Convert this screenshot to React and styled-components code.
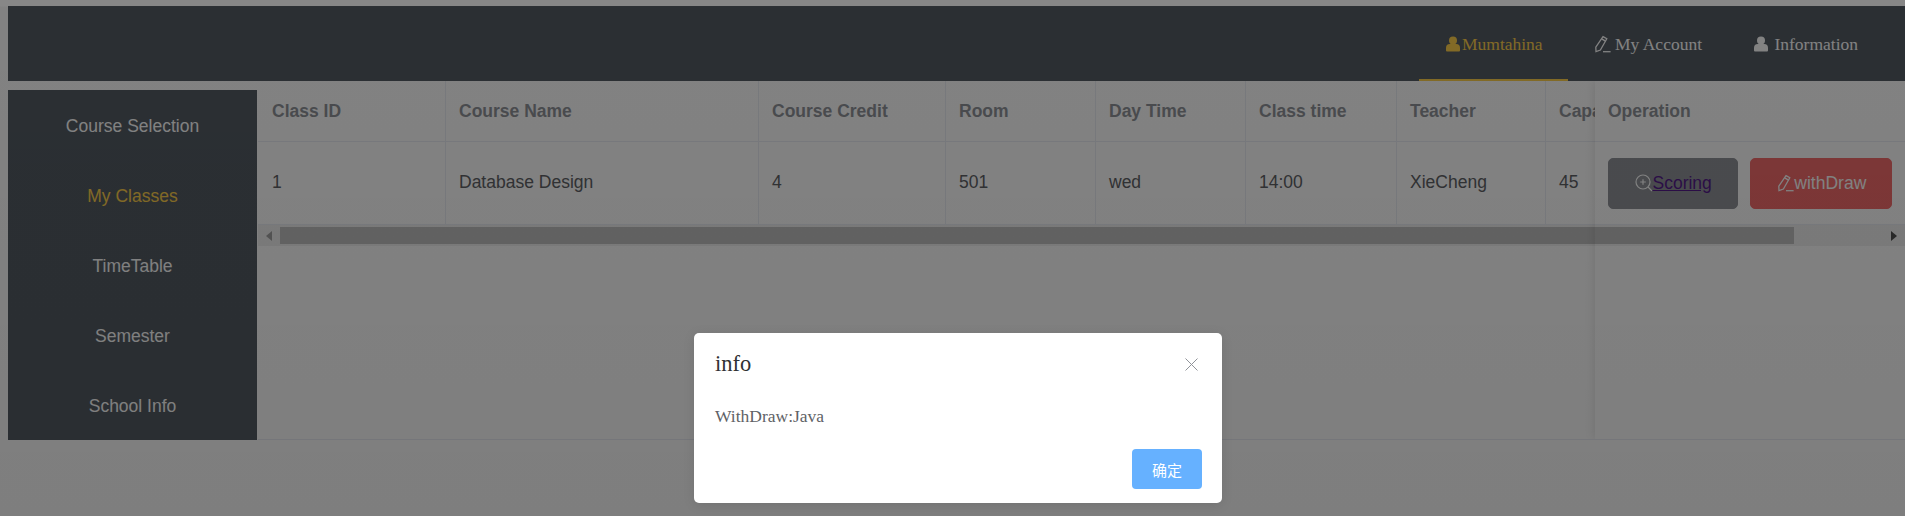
import React from 'react';
import styled, { createGlobalStyle } from 'styled-components';

const GlobalStyle = createGlobalStyle`
  html, body {
    margin: 0;
    padding: 0;
    background: #fff;
    font-family: "Liberation Serif", serif;
  }
`;

const Page = styled.div`
  position: relative;
  width: 1905px;
  height: 516px;
  padding: 6px 0 0 8px;
  box-sizing: border-box;
  overflow: hidden;
`;

const TopBar = styled.header`
  display: flex;
  justify-content: flex-end;
  height: 75px;
  padding-right: 22px;
  background: #545c64;
`;

const MenuItem = styled.div`
  display: flex;
  align-items: center;
  height: 75px;
  padding: 3px 25px 0;
  box-sizing: border-box;
  font-size: 17.5px;
  white-space: pre;
  color: ${({ $active }) => ($active ? '#ffd04b' : '#fff')};
  border-bottom: 2px solid ${({ $active }) => ($active ? '#ffd04b' : 'transparent')};
`;

const Body = styled.div`
  display: flex;
  gap: 1px;
`;

const Aside = styled.nav`
  flex: none;
  width: 249px;
  height: 350px;
  margin-top: 9px;
  background: #545c64;
  font-family: "Liberation Sans", Arial, sans-serif;
`;

const AsideItem = styled.div`
  display: flex;
  align-items: center;
  justify-content: center;
  height: 70px;
  padding-top: 2px;
  box-sizing: border-box;
  font-size: 17.5px;
  color: ${({ $active }) => ($active ? '#ffd04b' : '#fff')};
`;

const Main = styled.main`
  position: relative;
  flex: 1;
  height: 359px;
  overflow: hidden;
  border-bottom: 1px solid #ebeef5;
  box-sizing: border-box;
  font-family: "Liberation Sans", Arial, sans-serif;
  font-size: 17.5px;
`;

const Table = styled.table`
  table-layout: fixed;
  width: 1488px;
  border-collapse: separate;
  border-spacing: 0;
`;

const Th = styled.th`
  height: 61px;
  padding: 0 13px;
  box-sizing: border-box;
  width: ${({ $w }) => $w}px;
  text-align: left;
  font-weight: bold;
  color: #909399;
  border-right: 1px solid #ebeef5;
  border-bottom: 1px solid #ebeef5;
  white-space: nowrap;
  overflow: hidden;

  &:first-child {
    padding-left: 14px;
  }
`;

const Td = styled.td`
  height: 83px;
  padding: 0 13px 2px;
  box-sizing: border-box;
  color: #606266;
  border-right: 1px solid #ebeef5;
  border-bottom: 1px solid #ebeef5;
  white-space: nowrap;

  &:first-child {
    padding-left: 14px;
  }
`;

const ScrollBar = styled.div`
  display: flex;
  align-items: center;
  height: 21px;
  background: #f1f1f1;
`;

const ScrollArrow = styled.div`
  flex: none;
  display: flex;
  align-items: center;
  justify-content: center;
  width: 22px;
`;

const ScrollThumb = styled.div`
  flex: none;
  width: 1514px;
  height: 17px;
  background: #c1c1c1;
`;

const ScrollSpace = styled.div`
  flex: 1;
`;

const FixedColumn = styled.div`
  position: absolute;
  top: 0;
  right: 0;
  bottom: 0;
  width: 310px;
  box-shadow: 0 0 10px rgba(0, 0, 0, 0.12);
`;

const FixedHead = styled.div`
  display: flex;
  align-items: center;
  height: 61px;
  padding: 0 13px;
  box-sizing: border-box;
  background: #fff;
  font-weight: bold;
  color: #909399;
  border-bottom: 1px solid #ebeef5;
`;

const FixedRow = styled.div`
  display: flex;
  align-items: center;
  gap: 12px;
  height: 83px;
  padding: 0 13px;
  box-sizing: border-box;
  background: #fff;
  border-bottom: 1px solid #ebeef5;
`;

const ActionButton = styled.button`
  display: flex;
  align-items: center;
  height: 51px;
  padding: 0 ${({ $pad }) => $pad}px;
  border: 1px solid ${({ $bg }) => $bg};
  border-radius: 5px;
  background: ${({ $bg }) => $bg};
  color: #fff;
  font: inherit;
`;

const ScoreLink = styled.a`
  color: #551a8b;
  text-decoration: underline;
`;

const Overlay = styled.div`
  position: absolute;
  inset: 0;
  background: linear-gradient(
    rgba(0, 0, 0, 0.47) 6px,
    rgba(0, 0, 0, 0.49) 7px,
    rgba(0, 0, 0, 0.505) 100%
  );
`;

const Dialog = styled.section`
  position: absolute;
  left: 694px;
  top: 333px;
  display: flex;
  flex-direction: column;
  width: 528px;
  height: 170px;
  padding: 19px 20px 14px 21px;
  box-sizing: border-box;
  border-radius: 5px;
  background: #fff;
  box-shadow: 0 2px 12px rgba(0, 0, 0, 0.1);
`;

const DialogHead = styled.div`
  display: flex;
  align-items: center;
  justify-content: space-between;
  height: 24px;
  padding-right: 4px;
`;

const DialogTitle = styled.span`
  font-size: 22.5px;
  color: #303133;
`;

const DialogMessage = styled.p`
  margin: 30px 0 0;
  font-size: 17.5px;
  line-height: 20px;
  color: #606266;
`;

const DialogFooter = styled.div`
  display: flex;
  justify-content: flex-end;
  margin-top: 23px;
`;

const ConfirmButton = styled.button`
  width: 70px;
  height: 40px;
  padding: 0;
  border: 0;
  border-radius: 4px;
  background: #66b1ff;
  color: #fff;
  font-family: "Liberation Sans", "Noto Sans CJK SC", sans-serif;
  font-size: 15px;
`;

const Glyph = styled.svg`
  flex: none;
  display: block;
  width: 18px;
  height: 18px;
`;

const UserIcon = () => (
  <Glyph viewBox="0 0 18 18" fill="currentColor">
    <circle cx="9" cy="5.5" r="4" />
    <path d="M2 15.5v-2.7A3.8 3.8 0 0 1 5.8 9h6.4a3.8 3.8 0 0 1 3.8 3.8v2.7a1 1 0 0 1-1 1H3a1 1 0 0 1-1-1z" />
  </Glyph>
);

const PencilIcon = () => (
  <Glyph viewBox="0 0 18 18" fill="none" stroke="currentColor" strokeWidth="1.3">
    <path d="M10 1.6 13.8 3.8 7.4 15 3 16.6 2.8 12.2z" />
    <path d="M8.7 3.9 12.5 6.1" />
    <path d="M10 16.7h7.6" />
  </Glyph>
);

const ZoomIcon = () => (
  <Glyph viewBox="0 0 18 18" fill="none" stroke="currentColor" strokeWidth="1.2">
    <circle cx="8" cy="8" r="7" />
    <path d="M8 5.2v5.6M5.2 8h5.6M13 13l4 4" />
  </Glyph>
);

const ArrowLeft = () => (
  <svg width="6" height="10" viewBox="0 0 6 10" fill="#a3a3a3">
    <path d="M6 0v10L0 5z" />
  </svg>
);

const ArrowRight = () => (
  <svg width="6" height="10" viewBox="0 0 6 10" fill="#505050">
    <path d="M0 0v10l6-5z" />
  </svg>
);

const CloseIcon = () => (
  <svg width="13" height="13" viewBox="0 0 13 13" stroke="#909399" strokeWidth="1">
    <path d="M.5.5l12 12M12.5.5l-12 12" />
  </svg>
);

const columns = [
  { name: 'Class ID', width: 188, value: '1' },
  { name: 'Course Name', width: 313, value: 'Database Design' },
  { name: 'Course Credit', width: 187, value: '4' },
  { name: 'Room', width: 150, value: '501' },
  { name: 'Day Time', width: 150, value: 'wed' },
  { name: 'Class time', width: 151, value: '14:00' },
  { name: 'Teacher', width: 149, value: 'XieCheng' },
  { name: 'Capacity', width: 200, value: '45' },
];

const sideItems = ['Course Selection', 'My Classes', 'TimeTable', 'Semester', 'School Info'];

const App = () => {
  return (
    <Page>
      <GlobalStyle />
      <TopBar>
        <MenuItem $active>
          <UserIcon />
          Mumtahina
        </MenuItem>
        <MenuItem>
          <PencilIcon /> My Account
        </MenuItem>
        <MenuItem>
          <UserIcon /> Information
        </MenuItem>
      </TopBar>
      <Body>
        <Aside>
          {sideItems.map((item) => (
            <AsideItem key={item} $active={item === 'My Classes'}>
              {item}
            </AsideItem>
          ))}
        </Aside>
        <Main>
          <Table>
            <thead>
              <tr>
                {columns.map((c) => (
                  <Th key={c.name} $w={c.width}>
                    {c.name}
                  </Th>
                ))}
              </tr>
            </thead>
            <tbody>
              <tr>
                {columns.map((c) => (
                  <Td key={c.name}>{c.value}</Td>
                ))}
              </tr>
            </tbody>
          </Table>
          <ScrollBar>
            <ScrollArrow>
              <ArrowLeft />
            </ScrollArrow>
            <ScrollThumb />
            <ScrollSpace />
            <ScrollArrow>
              <ArrowRight />
            </ScrollArrow>
          </ScrollBar>
          <FixedColumn>
            <FixedHead>Operation</FixedHead>
            <FixedRow>
              <ActionButton $bg="#909399" $pad={25.5}>
                <ZoomIcon />
                <ScoreLink>Scoring</ScoreLink>
              </ActionButton>
              <ActionButton $bg="#f56c6c" $pad={25}>
                <PencilIcon />
                withDraw
              </ActionButton>
            </FixedRow>
          </FixedColumn>
        </Main>
      </Body>
      <Overlay />
      <Dialog>
        <DialogHead>
          <DialogTitle>info</DialogTitle>
          <CloseIcon />
        </DialogHead>
        <DialogMessage>WithDraw:Java</DialogMessage>
        <DialogFooter>
          <ConfirmButton>确定</ConfirmButton>
        </DialogFooter>
      </Dialog>
    </Page>
  );
};

export default App;
